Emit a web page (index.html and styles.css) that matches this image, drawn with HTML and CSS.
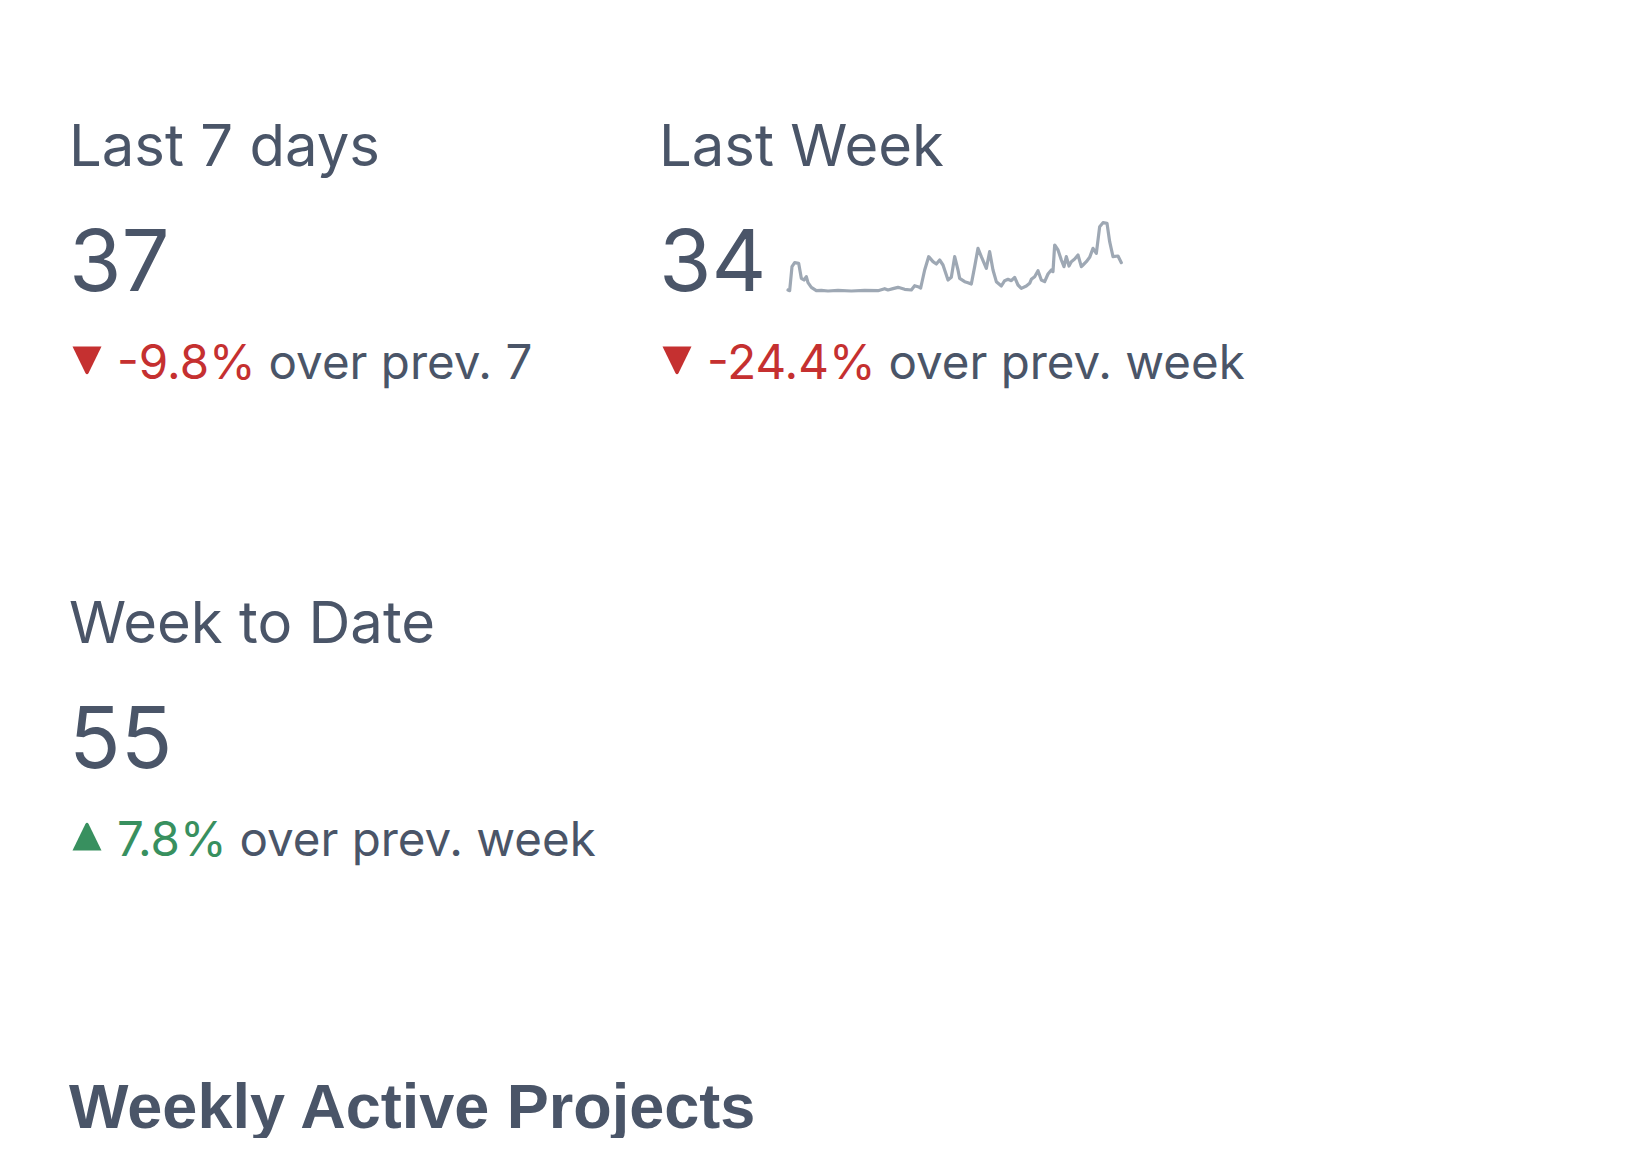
FILE: index.html
```html
<!DOCTYPE html>
<html lang="en">
<head>
<meta charset="utf-8">
<title>Stats</title>
<link rel="stylesheet" href="styles.css">
</head>
<body>
<main class="page">
  <section class="stats">
    <div class="stat">
      <div class="stat-title">Last 7 days</div>
      <div class="stat-value-row"><span class="stat-value">37</span></div>
      <div class="stat-delta">
        <svg class="tri" viewBox="0 0 32 30" width="32" height="30"><path d="M1.5 1.5 H30.5 L17.6 28 Q16 30.5 14.4 28 Z" fill="#c53030"/></svg>
        <span class="neg">-9.8%</span>
        <span class="rest">over prev. 7</span>
      </div>
    </div>
    <div class="stat">
      <div class="stat-title">Last Week</div>
      <div class="stat-value-row">
        <span class="stat-value">34</span>
        <svg class="spark" viewBox="0 0 1080 300" width="360" height="100">
          <path d="M30 270 L35 272 L42 200 L50 188 L62 190 L70 235 L78 240 L85 230 L90 248 L100 262 L115 272 L130 271 L150 273 L180 271 L220 273 L260 271 L300 272 L320 266 L330 270 L345 266 L360 262 L380 268 L400 270 L410 257 L420 260 L428 264 L440 210 L452 170 L465 185 L475 192 L485 180 L495 195 L510 240 L520 232 L530 170 L540 210 L545 235 L560 245 L570 248 L580 252 L590 200 L600 145 L610 170 L625 205 L635 155 L645 210 L655 245 L670 258 L680 242 L690 238 L700 242 L710 232 L720 255 L730 265 L745 258 L755 250 L760 238 L770 230 L780 212 L790 240 L800 245 L810 222 L820 210 L825 215 L830 135 L840 150 L850 180 L858 200 L865 170 L873 198 L880 185 L890 177 L900 165 L910 200 L915 195 L925 185 L935 172 L945 145 L955 160 L965 80 L975 68 L987 70 L995 125 L1005 170 L1020 168 L1030 188" fill="none" stroke="#9ea8b4" stroke-width="3.2" stroke-linejoin="round" stroke-linecap="round" vector-effect="non-scaling-stroke"/>
        </svg>
      </div>
      <div class="stat-delta">
        <svg class="tri" viewBox="0 0 32 30" width="32" height="30"><path d="M1.5 1.5 H30.5 L17.6 28 Q16 30.5 14.4 28 Z" fill="#c53030"/></svg>
        <span class="neg">-24.4%</span>
        <span class="rest">over prev. week</span>
      </div>
    </div>
    <div class="stat">
      <div class="stat-title">Week to Date</div>
      <div class="stat-value-row"><span class="stat-value">55</span></div>
      <div class="stat-delta">
        <svg class="tri" viewBox="0 0 32 30" width="32" height="30"><path d="M1.5 28.5 H30.5 L17.6 2 Q16 -0.5 14.4 2 Z" fill="#38905f"/></svg>
        <span class="pos">7.8%</span>
        <span class="rest">over prev. week</span>
      </div>
    </div>
  </section>
  <h2 class="section-heading">Weekly Active Projects</h2>
</main>
</body>
</html>
```
FILE: styles.css
```css
html, body {
  margin: 0;
  padding: 0;
  background: #ffffff;
}

body {
  font-family: "Inter", "Roboto", "Liberation Sans", sans-serif;
  color: #4a5568;
}

.page {
  padding: 116px 0 0 69px;
}

.stats {
  display: grid;
  grid-template-columns: 590px 590px;
  row-gap: 207px;
}

.stat-title {
  font-size: 58px;
  line-height: 1;
  margin-bottom: 44px;
}

.stat-value-row {
  display: flex;
  align-items: flex-start;
  height: 85px;
  margin-bottom: 35px;
}

.stat-value {
  font-size: 85px;
  line-height: 1;
}

.spark {
  display: block;
  flex: none;
  margin-left: 12px;
  margin-top: -18px;
  overflow: visible;
}

.stat-delta {
  display: flex;
  align-items: baseline;
  font-size: 47.5px;
  line-height: 1;
  white-space: nowrap;
}

.tri {
  display: block;
  flex: none;
  align-self: flex-start;
  margin-top: 7px;
  margin-left: 2px;
  margin-right: 14px;
}

.rest {
  margin-left: 0.27em;
}

.neg {
  color: #c53030;
}

.pos {
  color: #38905f;
}

.section-heading {
  margin: 213px 0 0 0;
  font-family: "Liberation Sans", Arial, sans-serif;
  font-weight: 700;
  font-size: 63px;
  line-height: 1;
  color: #4a5568;
}
```
